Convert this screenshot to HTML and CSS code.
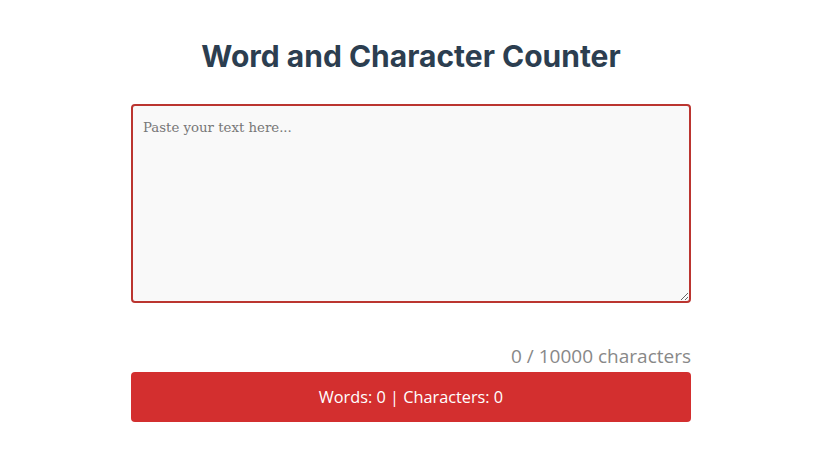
FILE: index.html
```html
<!DOCTYPE html>
<html lang="en">
<head>
<meta charset="utf-8">
<title>Word and Character Counter</title>
<link rel="stylesheet" href="styles.css">
</head>
<body>
<main class="container">
  <h1 class="title">Word and Character Counter</h1>
  <textarea class="input" placeholder="Paste your text here..."></textarea>
  <div class="limit">0 / 10000 characters</div>
  <div class="result">Words: 0 | Characters: 0</div>
</main>
</body>
</html>
```

FILE: styles.css
```css
html, body {
  margin: 0;
  padding: 0;
  background: #ffffff;
}
body {
  padding-right: 7px;
  font-family: "Open Sans", sans-serif;
}
.container {
  width: 560px;
  margin: 0 auto;
  padding-top: 38px;
  display: flex;
  flex-direction: column;
}
.title {
  margin: 0 0 30px;
  text-align: center;
  font-family: Inter, sans-serif;
  font-weight: 700;
  font-size: 30px;
  line-height: 36px;
  color: #2c3e50;
}
.input {
  box-sizing: border-box;
  width: 560px;
  height: 199px;
  padding: 14px 10px 12px;
  border: 2px solid #bb3530;
  border-radius: 4px;
  background: #f9f9f9;
  font-family: "DejaVu Serif", serif;
  font-size: 13.3px;
  color: #333;
  resize: vertical;
  outline: none;
}
.input::placeholder {
  color: #777;
}
.limit {
  margin-top: 41px;
  text-align: right;
  font-size: 19px;
  line-height: 24px;
  color: #888;
}
.result {
  margin-top: 4px;
  height: 50px;
  display: flex;
  align-items: center;
  justify-content: center;
  background: #d32f2f;
  color: #fff;
  border-radius: 4px;
  font-size: 16.3px;
}
```
